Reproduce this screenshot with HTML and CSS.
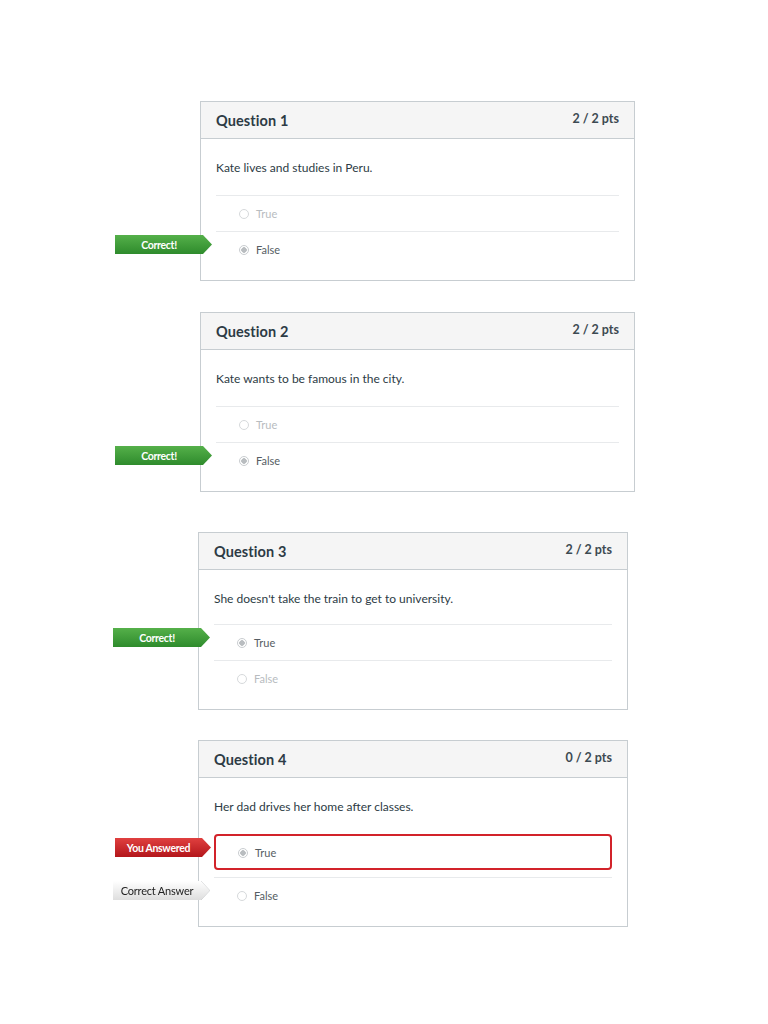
FILE: index.html
```html
<!DOCTYPE html>
<html lang="en">
	<head>
		<meta charset="utf-8">
		<meta name="viewport" content="width=device-width,initial-scale=1">
		<title>Quiz Results</title>
		<link rel="stylesheet" href="styles.css">
	</head>

	<body>
		<main class="quiz">

			<section class="question">
				<header class="question__header">
					<h2 class="question__title">Question 1</h2>
					<span class="question__pts">2 / 2 pts</span>
				</header>
				<div class="question__body">
					<p class="question__text">Kate lives and studies in Peru.</p>
					<ul class="answers">
						<li class="answer"><span class="radio"></span>True</li>
						<li class="answer answer--picked">
							<span class="tag tag--correct"><span class="tag__inner">Correct!</span></span>
							<span class="radio"></span>False
						</li>
					</ul>
				</div>
			</section>

			<section class="question">
				<header class="question__header">
					<h2 class="question__title">Question 2</h2>
					<span class="question__pts">2 / 2 pts</span>
				</header>
				<div class="question__body">
					<p class="question__text">Kate wants to be famous in the city.</p>
					<ul class="answers">
						<li class="answer"><span class="radio"></span>True</li>
						<li class="answer answer--picked">
							<span class="tag tag--correct"><span class="tag__inner">Correct!</span></span>
							<span class="radio"></span>False
						</li>
					</ul>
				</div>
			</section>

			<section class="question question--shifted question--q3">
				<header class="question__header">
					<h2 class="question__title">Question 3</h2>
					<span class="question__pts">2 / 2 pts</span>
				</header>
				<div class="question__body">
					<p class="question__text">She doesn't take the train to get to university.</p>
					<ul class="answers">
						<li class="answer answer--picked">
							<span class="tag tag--correct"><span class="tag__inner">Correct!</span></span>
							<span class="radio"></span>True
						</li>
						<li class="answer"><span class="radio"></span>False</li>
					</ul>
				</div>
			</section>

			<section class="question question--shifted question--q4">
				<header class="question__header">
					<h2 class="question__title">Question 4</h2>
					<span class="question__pts">0 / 2 pts</span>
				</header>
				<div class="question__body">
					<p class="question__text">Her dad drives her home after classes.</p>
					<ul class="answers">
						<li class="answer answer--picked answer--wrong">
							<span class="tag tag--wrong"><span class="tag__inner">You Answered</span></span>
							<span class="radio"></span>True
						</li>
						<li class="answer answer--key">
							<span class="tag tag--key"><span class="tag__inner">Correct Answer</span></span>
							<span class="radio radio--empty"></span>False
						</li>
					</ul>
				</div>
			</section>

		</main>
	</body>
</html>
```

FILE: styles.css
```css
/* PAGE */
* {
	box-sizing: border-box;
}
body {
	background: #fff;
	color: #2d3b45;
	font-family: Lato, 'Open Sans', sans-serif;
	margin: 0;
}
.quiz {
	display: flex;
	flex-direction: column;
	padding-block-start: 101px;
}

/* QUESTION CARD */
.question {
	border: 1px solid #c7cdd1;
	margin-inline-start: 200px;
	width: 435px;

	& + & {
		margin-block-start: 31px;
	}
}
.question--shifted {
	margin-inline-start: 198px;
	width: 430px;
}
.question--q3 {
	margin-block-start: 40px !important;

	.question__text {
		margin-block-end: 17px;
	}
}
.question--q4 {
	margin-block-start: 30px !important;
}

.question__header {
	align-items: center;
	background-color: #f5f5f5;
	border-block-end: 1px solid #c7cdd1;
	display: flex;
	height: 37px;
	justify-content: space-between;
	padding-inline: 15px;
}
.question__title {
	font-size: 14.5px;
	font-weight: 700;
	letter-spacing: 0.1px;
	margin: 0;
}
.question__pts {
	color: #3d4a52;
	font-size: 12.5px;
	font-weight: 700;
	padding-block-end: 4px;
}

.question__body {
	padding: 21px 15px 13px;
}
.question__text {
	font-size: 12px;
	line-height: 16px;
	margin: 0 0 19px;
}

/* ANSWERS */
.answers {
	list-style: none;
	margin: 0;
	padding: 0;
}
.answer {
	align-items: center;
	border-block-start: 1px solid #e8eaec;
	color: #b8bcbf;
	display: flex;
	font-size: 11px;
	gap: 7px;
	height: 36px;
	padding-inline-start: 23px;
	position: relative;
}
.answer--picked {
	color: #555d63;
}
.answer--wrong {
	border: 2px solid #d2232a;
	border-radius: 4px;
	margin-block-end: 7px;
	padding-inline-start: 22px;
	padding-block-start: 1px;
}
.answer--key {
	color: #555d63;
}

.radio {
	background: #fff;
	border: 1px solid #d6d9db;
	border-radius: 50%;
	display: inline-block;
	height: 10px;
	width: 10px;
}
.answer--picked .radio {
	background: radial-gradient(circle, #b9bdc0 0 2.5px, #fff 3px);
	border-color: #c9cdd0;
}

/* RESULT TAGS */
.tag {
	position: absolute;
	right: calc(100% + 4px);
	top: 3px;
}
.answer--wrong .tag {
	right: calc(100% + 5px);
	top: 2px;
}
.tag__inner {
	align-items: center;
	clip-path: polygon(0 0, calc(100% - 9px) 0, 100% 50%, calc(100% - 9px) 100%, 0 100%);
	color: #fff;
	display: flex;
	font-size: 10.5px;
	font-weight: 700;
	height: 19px;
	justify-content: center;
	letter-spacing: -0.3px;
	padding-inline-end: 9px;
	width: 97px;
}
.tag--correct .tag__inner {
	background: linear-gradient(#55b04a, #2e8b2c);
}
.tag--wrong .tag__inner {
	background: linear-gradient(#e0403f, #b3161b);
	width: 96px;
}
.tag--key {
	filter: drop-shadow(0 0 0.6px #8a8f93);
	right: calc(100% + 4px);
}
.tag--key .tag__inner {
	background: linear-gradient(#fff, #dedede);
	color: #222;
	font-size: 11px;
	font-weight: 400;
	letter-spacing: -0.2px;
	width: 97px;
}
```
